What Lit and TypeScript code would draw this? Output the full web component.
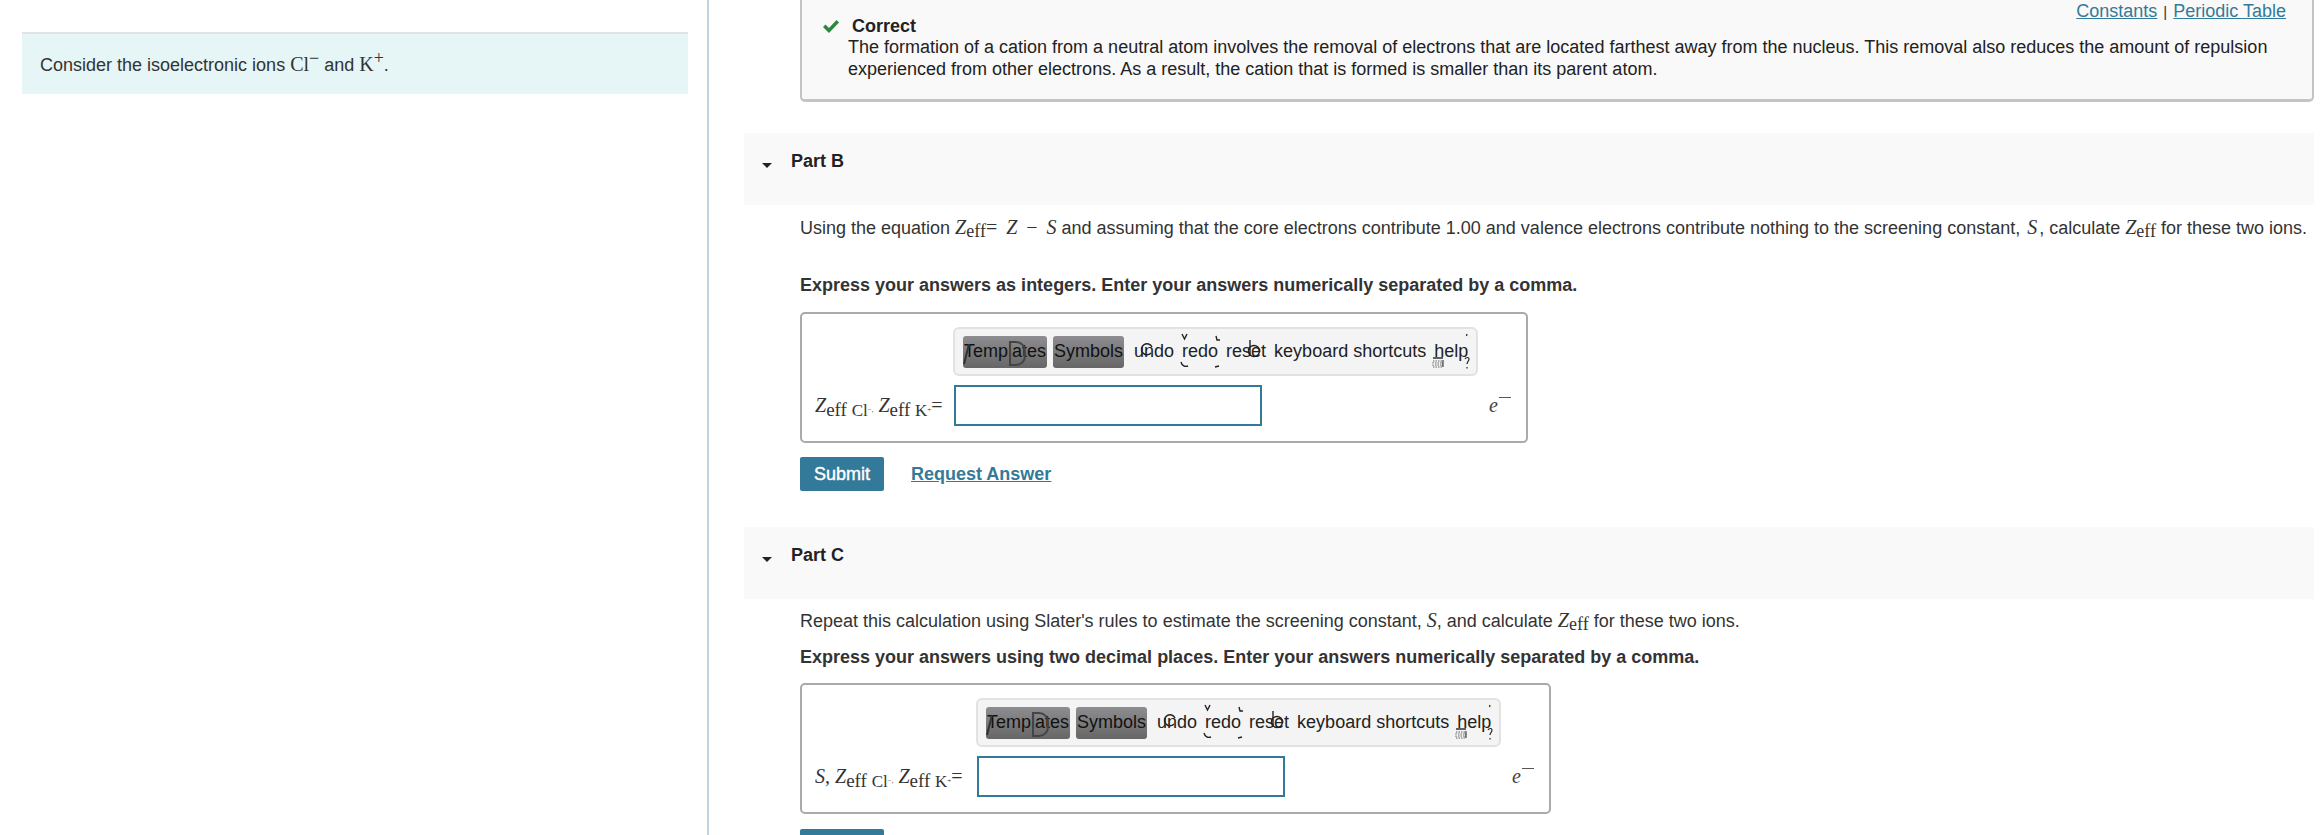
import { LitElement, html, css, svg } from 'lit';
import { customElement, property } from 'lit/decorators.js';

const SANS = css`"Liberation Sans", Arial, sans-serif`;

// the toolbar's icon sprites are broken in the original, they land on top of the words
@customElement('math-toolbar')
class MathToolbar extends LitElement {
  static styles = css`
    :host {
      display: flex;
      align-items: center;
      box-sizing: border-box;
      height: 49px;
      width: 525px;
      padding: 0 0 0 8px;
      background: #f4f4f4;
      border: 2px solid #e2e2e2;
      border-radius: 6px;
      font-family: ${SANS};
      font-size: 18px;
      color: #222;
      position: relative;
    }
    .btn {
      display: flex;
      flex: 0 0 auto;
      align-items: center;
      justify-content: center;
      height: 32px;
      box-sizing: border-box;
      border-radius: 3px;
      background: linear-gradient(#8e8e92, #666);
      color: #111;
      margin-right: 6px;
    }
    .templates { width: 84px; }
    .symbols { width: 71px; margin-right: 0; }
    .word { margin-left: 8px; white-space: nowrap; }
    .first { margin-left: 10px; }
    .sprites {
      position: absolute;
      left: 0;
      top: 0;
      width: 521px;
      height: 45px;
      pointer-events: none;
    }
  `;

  render() {
    return html`
      <div class="btn templates">Templates</div>
      <div class="btn symbols">Symbols</div>
      <span class="word first">undo</span>
      <span class="word">redo</span>
      <span class="word">reset</span>
      <span class="word">keyboard shortcuts</span>
      <span class="word">help</span>
      <svg class="sprites" viewBox="0 0 521 45" fill="none" stroke="#222" stroke-width="1.4">
        ${svg`
          <path d="M9 35L14 15" stroke-width="2" stroke="#333" />
          <path d="M55 13h6a9 9 0 0 1 9 9v5a9 9 0 0 1-9 9h-6z" stroke="#444" stroke-width="2" />
          <path d="M196 24a5.500 5.500 0 1 1 1-6" />
          <path d="M227 5l2.500 5 2.500-5M261 7l1 4h3M226 33c1 4 4 5 7 4M260 38l4-1" />
          <path d="M295 11v16" />
          <circle cx="299" cy="22" r="5.500" />
          <path d="M478 29h10" />
          <path d="M478 32h9v6h-9zM480 34h6M480 36h6" stroke-width="1" stroke="#666" stroke-dasharray="1.500 1" />
          <path d="M488 31v7" stroke-width="1" />
          <path d="M510 30c1-2 4-2 4 0 0 2-2 3-2 5M512 38v1.500M512 5l-.5 2" stroke-width="1.200" />
        `}
      </svg>
    `;
  }
}

@customElement('answer-box')
class AnswerBox extends LitElement {
  @property({ type: Boolean }) wide = false;

  static styles = css`
    :host { display: block; }
    .box {
      box-sizing: border-box;
      width: 728px;
      height: 131px;
      border: 2px solid #aaa;
      border-radius: 5px;
      padding: 13px 14px 0 13px;
      background: #fff;
    }
    .box.wide { width: 751px; }
    .tools { display: flex; margin-left: 138px; }
    .box.wide .tools { margin-left: 161px; }
    .row {
      display: flex;
      align-items: center;
      margin-top: 9px;
    }
    .label {
      flex: 0 0 auto;
      width: 139px;
      font: 20px "Liberation Serif", serif;
      white-space: nowrap;
      color: #333;
    }
    .box.wide .label { width: 162px; }
    .label sub { font-size: 19px; line-height: 0; vertical-align: -4px; }
    .label small { font-size: 17px; }
    .label .tiny { font-size: 7px; }
    .input {
      box-sizing: border-box;
      width: 308px;
      height: 41px;
      border: 2px solid #337a9a;
      background: #fff;
    }
    .unit {
      margin-left: auto;
      margin-right: 1px;
      font: italic 20px "Liberation Serif", serif;
      color: #444;
      display: flex;
      align-items: flex-start;
    }
    .dash {
      display: block;
      width: 12px;
      height: 1px;
      background: #555;
      margin: 3px 0 0 1px;
    }
  `;

  render() {
    return html`
      <div class="box ${this.wide ? 'wide' : ''}">
        <div class="tools"><math-toolbar></math-toolbar></div>
        <div class="row">
          <div class="label">
            ${this.wide ? html`<i>S</i>, ` : ''}<i>Z</i><sub>eff <small>Cl</small></sub><span class="tiny">−,</span>
            <i>Z</i><sub>eff <small>K</small></sub><span class="tiny">+</span>=
          </div>
          <div class="input"></div>
          <div class="unit">e<span class="dash"></span></div>
        </div>
      </div>
    `;
  }
}

@customElement('app-root')
class AppRoot extends LitElement {
  static styles = css`
    :host {
      display: block;
      width: 2324px;
      height: 835px;
      overflow: hidden;
      background: #fff;
      font-family: ${SANS};
      font-size: 18px;
      color: #333;
    }
    .page { display: flex; height: 835px; }
    .left {
      flex: 0 0 auto;
      box-sizing: border-box;
      width: 709px;
      padding: 32px 19px 0 22px;
      border-right: 2px solid #c3d2e0;
    }
    .intro {
      box-sizing: border-box;
      height: 62px;
      border-top: 2px solid #e2e2e2;
      background: #e6f5f5;
      padding-left: 18px;
      display: flex;
      align-items: center;
      color: #333;
    }
    .intro .m { font-family: "Liberation Serif", serif; font-size: 20px; }
    .intro sup { font-size: 18px; line-height: 0; vertical-align: 7px; }
    .right {
      flex: 1;
      padding: 0 10px 0 35px;
      min-width: 0;
    }
    .indent { margin-left: 56px; }
    .feedback {
      position: relative;
      box-sizing: border-box;
      height: 103px;
      margin-top: -1px;
      background: #f9f9f9;
      border: 2px solid #c4c4c4;
      border-top: none;
      border-bottom-width: 3px;
      border-radius: 0 0 5px 5px;
      padding: 17px 0 0 46px;
      line-height: 22px;
      color: #222;
    }
    .links {
      position: absolute;
      right: 26px;
      top: 1px;
      line-height: 22px;
      color: #333;
    }
    .links span { font-size: 15px; margin: 0 1px; }
    a { color: #337a9a; text-decoration: underline; }
    .status { display: flex; align-items: center; gap: 12px; margin-left: -26px; height: 20px; font-weight: bold; }
    .status svg { display: block; }
    .band {
      display: flex;
      box-sizing: border-box;
      height: 72px;
      background: #f9f9f9;
      padding: 17px 0 0 18px;
      font-weight: bold;
      color: #222;
      line-height: 22px;
    }
    .band svg { margin: 13px 19px 0 0; }
    .band.b { margin-top: 31px; }
    .band.c { margin-top: 36px; }
    p { margin: 0; line-height: 22px; white-space: nowrap; }
    .math { font-family: "Liberation Serif", serif; font-size: 20px; line-height: 0; }
    .math sub { font-size: 18px; line-height: 0; vertical-align: -3px; }
    .wider { word-spacing: 4px; }
    .pad { margin: 0 2px; }
    .eq { margin-top: 12px; }
    .strong { font-weight: bold; color: #333; }
    .b-ask { margin-top: 35px; }
    .c-q { margin-top: 11px; }
    .c-ask { margin-top: 14px; }
    .b-box { margin-top: 16px; }
    .c-box { margin-top: 15px; }
    .actions {
      display: flex;
      align-items: center;
      gap: 27px;
      margin-top: 14px;
    }
    .c-actions { margin-top: 15px; }
    .submit {
      box-sizing: border-box;
      width: 84px;
      height: 34px;
      display: flex;
      align-items: center;
      justify-content: center;
      background: #337a9a;
      color: #fff;
      border-radius: 2px;
      -webkit-text-stroke: 0.4px #fff;
    }
    .req { font-weight: bold; }
  `;

  private zeff() {
    return html`<span class="math"><i>Z</i><sub>eff</sub></span>`;
  }

  private arrow() {
    return html`<svg width="10" height="5" viewBox="0 0 10 5"><path d="M0 0h10L5 5z" fill="#222" /></svg>`;
  }

  render() {
    return html`
      <div class="page">
        <div class="left">
          <div class="intro">
            <span>Consider the isoelectronic ions <span class="m">Cl<sup>−</sup></span> and <span class="m">K<sup>+</sup></span>.</span>
          </div>
        </div>
        <div class="right">
          <div class="indent feedback">
            <div class="links"><a>Constants</a> <span>|</span> <a>Periodic Table</a></div>
            <div class="status">
              <svg width="18" height="15" viewBox="0 0 18 15"><path d="M1 8l2.500-2.500 3.500 3.500L14.500 1 17 3.500 7 14z" fill="#2e8540" /></svg>
              Correct
            </div>
            <p>The formation of a cation from a neutral atom involves the removal of electrons that are located farthest away from the nucleus. This removal also reduces the amount of repulsion</p>
            <p>experienced from other electrons. As a result, the cation that is formed is smaller than its parent atom.</p>
          </div>

          <div class="band b">${this.arrow()}Part B</div>
          <div class="indent">
            <p class="eq">Using the equation ${this.zeff()}<span class="math wider">= <i>Z</i> − <i>S</i></span> and assuming that the core electrons contribute 1.00 and valence electrons contribute nothing to the screening constant, <span class="math pad"><i>S</i></span>, calculate ${this.zeff()} for these two ions.</p>
            <p class="strong b-ask">Express your answers as integers. Enter your answers numerically separated by a comma.</p>
            <answer-box class="b-box"></answer-box>
            <div class="actions">
              <div class="submit">Submit</div>
              <a class="req">Request Answer</a>
            </div>
          </div>

          <div class="band c">${this.arrow()}Part C</div>
          <div class="indent">
            <p class="c-q">Repeat this calculation using Slater's rules to estimate the screening constant, <span class="math"><i>S</i></span>, and calculate ${this.zeff()} for these two ions.</p>
            <p class="strong c-ask">Express your answers using two decimal places. Enter your answers numerically separated by a comma.</p>
            <answer-box class="c-box" wide></answer-box>
            <div class="actions c-actions">
              <div class="submit"></div>
            </div>
          </div>
        </div>
      </div>
    `;
  }
}
